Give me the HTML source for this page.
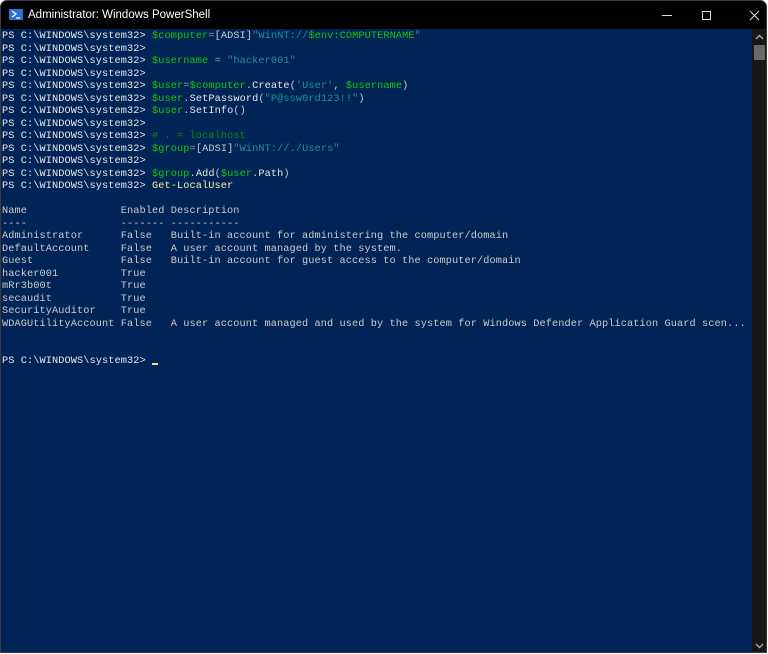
<!DOCTYPE html>
<html><head><meta charset="utf-8"><style>
html,body{margin:0;padding:0;background:#fff;}
#win{position:absolute;left:0;top:0;width:767px;height:653px;background:#000;border:1px solid #3a3a3a;border-radius:7px 7px 0 0;overflow:hidden;box-sizing:border-box;}
#title{position:absolute;left:0;top:0;width:100%;height:28px;background:#000;color:#fff;font:11.5px "Liberation Sans",sans-serif;}
#title .t{position:absolute;left:27px;top:8px;}
#icon{position:absolute;left:8px;top:8px;width:14px;height:11px;background:#2f6fd0;}
#term{position:absolute;left:0;top:28px;width:751px;height:624px;background:#012456;}
#sb{position:absolute;left:751px;top:28px;width:15px;height:624px;background:#171717;}
#thumb{position:absolute;left:2px;top:16px;width:11px;height:15px;background:#6a6a6a;}
pre{margin:0;position:absolute;left:1px;top:1px;font:10.27px/12.5px "Liberation Mono",monospace;letter-spacing:0.09px;color:#cccccc;}
.g{color:#16c60c}.y{color:#f9f1a5}.s{color:#2a8c9c}.c{color:#0f8a0c}.o{color:#9a9a9a}.w{color:#e8e8e8}
.cur{display:inline-block;width:6px;height:2px;background:#f9d48a;vertical-align:-2px}
</style></head><body>
<div id="win">
<div id="title"><div id="icon"><svg width="14" height="11"><path d="M3 2 L7 5 L3 8" stroke="#fff" stroke-width="1.3" fill="none"/><path d="M7 9 H11" stroke="#fff" stroke-width="1.2"/></svg></div><span class="t">Administrator: Windows PowerShell</span>
<svg style="position:absolute;left:655px;top:9px" width="110" height="12"><path d="M6 5.5 H16" stroke="#ddd" stroke-width="1"/><rect x="46.5" y="1.5" width="8" height="8" stroke="#ddd" fill="none"/><path d="M94 1 L103 10 M103 1 L94 10" stroke="#ddd" stroke-width="1"/></svg>
</div>
<div id="term"><pre><span class="w">PS C:\WINDOWS\system32&gt;</span> <span class="g">$computer</span><span class="o">=</span>[ADSI]<span class="s">"WinNT://</span><span class="g">$env:COMPUTERNAME</span><span class="s">"</span>
<span class="w">PS C:\WINDOWS\system32&gt;</span>
<span class="w">PS C:\WINDOWS\system32&gt;</span> <span class="g">$username</span> <span class="o">=</span> <span class="s">"hacker001"</span>
<span class="w">PS C:\WINDOWS\system32&gt;</span>
<span class="w">PS C:\WINDOWS\system32&gt;</span> <span class="g">$user</span><span class="o">=</span><span class="g">$computer</span>.<span class="w">Create</span>(<span class="s">'User'</span>, <span class="g">$username</span>)
<span class="w">PS C:\WINDOWS\system32&gt;</span> <span class="g">$user</span>.<span class="w">SetPassword</span>(<span class="s">"P@ssw0rd123!!"</span>)
<span class="w">PS C:\WINDOWS\system32&gt;</span> <span class="g">$user</span>.<span class="w">SetInfo</span>()
<span class="w">PS C:\WINDOWS\system32&gt;</span>
<span class="w">PS C:\WINDOWS\system32&gt;</span> <span class="c"># . = localhost</span>
<span class="w">PS C:\WINDOWS\system32&gt;</span> <span class="g">$group</span><span class="o">=</span>[ADSI]<span class="s">"WinNT://./Users"</span>
<span class="w">PS C:\WINDOWS\system32&gt;</span>
<span class="w">PS C:\WINDOWS\system32&gt;</span> <span class="g">$group</span>.<span class="w">Add</span>(<span class="g">$user</span>.<span class="w">Path</span>)
<span class="w">PS C:\WINDOWS\system32&gt;</span> <span class="y">Get-LocalUser</span>

Name               Enabled Description
----               ------- -----------
Administrator      False   Built-in account for administering the computer/domain
DefaultAccount     False   A user account managed by the system.
Guest              False   Built-in account for guest access to the computer/domain
hacker001          True
mRr3b00t           True
secaudit           True
SecurityAuditor    True
WDAGUtilityAccount False   A user account managed and used by the system for Windows Defender Application Guard scen...


<span class="w">PS C:\WINDOWS\system32&gt;</span> <span class="cur"></span></pre></div>
<div id="sb"><svg style="position:absolute;left:3px;top:5px" width="9" height="6"><path d="M1 5 L4.5 1.5 L8 5" stroke="#aaa" stroke-width="1.4" fill="none"/></svg><div id="thumb"></div><svg style="position:absolute;left:3px;top:614px" width="9" height="6"><path d="M1 1 L4.5 4.5 L8 1" stroke="#aaa" stroke-width="1.4" fill="none"/></svg></div>
</div>
</body></html>
